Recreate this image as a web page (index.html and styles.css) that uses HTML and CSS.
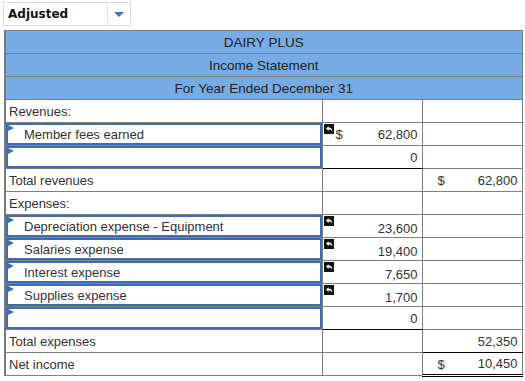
FILE: index.html
```html
<!DOCTYPE html>
<html>
<head>
<meta charset="utf-8">
<link rel="stylesheet" href="styles.css">
</head>
<body>
<div class="dropdown">
  <span class="dd-label">Adjusted</span>
  <span class="dd-btn"><span class="dd-arrow"></span></span>
</div>
<table class="stmt">
  <colgroup><col class="c1"><col class="c2"><col class="c3"></colgroup>
  <tr class="hdr"><td colspan="3">DAIRY PLUS</td></tr>
  <tr class="hdr"><td colspan="3">Income Statement</td></tr>
  <tr class="hdr"><td colspan="3">For Year Ended December 31</td></tr>
  <tr><td class="lbl">Revenues:</td><td></td><td></td></tr>
  <tr><td class="inp"><div class="box"><span class="flag"></span>Member fees earned</div></td>
      <td class="num"><span class="undo"><svg viewBox="0 0 10 10" width="10" height="10"><rect width="10" height="10" fill="#111"/><path d="M2 4.6 L4.6 2.2 L4.6 3.6 C7 3.6 8.3 5 8.3 7.6 C7.6 6 6.4 5.4 4.6 5.5 L4.6 7 Z" fill="#fff"/></svg></span><span class="dol">$</span><span class="v">62,800</span></td><td></td></tr>
  <tr><td class="inp"><div class="box"><span class="flag"></span></div></td>
      <td class="num under"><span class="v">0</span></td><td></td></tr>
  <tr><td class="lbl">Total revenues</td><td></td><td class="num"><span class="dol d3">$</span><span class="v">62,800</span></td></tr>
  <tr><td class="lbl">Expenses:</td><td></td><td></td></tr>
  <tr><td class="inp"><div class="box"><span class="flag"></span>Depreciation expense - Equipment</div></td>
      <td class="num"><span class="undo"><svg viewBox="0 0 10 10" width="10" height="10"><rect width="10" height="10" fill="#111"/><path d="M2 4.6 L4.6 2.2 L4.6 3.6 C7 3.6 8.3 5 8.3 7.6 C7.6 6 6.4 5.4 4.6 5.5 L4.6 7 Z" fill="#fff"/></svg></span><span class="v low">23,600</span></td><td></td></tr>
  <tr><td class="inp"><div class="box"><span class="flag"></span>Salaries expense</div></td>
      <td class="num"><span class="undo"><svg viewBox="0 0 10 10" width="10" height="10"><rect width="10" height="10" fill="#111"/><path d="M2 4.6 L4.6 2.2 L4.6 3.6 C7 3.6 8.3 5 8.3 7.6 C7.6 6 6.4 5.4 4.6 5.5 L4.6 7 Z" fill="#fff"/></svg></span><span class="v low">19,400</span></td><td></td></tr>
  <tr><td class="inp"><div class="box"><span class="flag"></span>Interest expense</div></td>
      <td class="num"><span class="undo"><svg viewBox="0 0 10 10" width="10" height="10"><rect width="10" height="10" fill="#111"/><path d="M2 4.6 L4.6 2.2 L4.6 3.6 C7 3.6 8.3 5 8.3 7.6 C7.6 6 6.4 5.4 4.6 5.5 L4.6 7 Z" fill="#fff"/></svg></span><span class="v low">7,650</span></td><td></td></tr>
  <tr><td class="inp"><div class="box"><span class="flag"></span>Supplies expense</div></td>
      <td class="num"><span class="undo"><svg viewBox="0 0 10 10" width="10" height="10"><rect width="10" height="10" fill="#111"/><path d="M2 4.6 L4.6 2.2 L4.6 3.6 C7 3.6 8.3 5 8.3 7.6 C7.6 6 6.4 5.4 4.6 5.5 L4.6 7 Z" fill="#fff"/></svg></span><span class="v low">1,700</span></td><td></td></tr>
  <tr><td class="inp"><div class="box"><span class="flag"></span></div></td>
      <td class="num under"><span class="v">0</span></td><td></td></tr>
  <tr><td class="lbl">Total expenses</td><td></td><td class="num under"><span class="v">52,350</span></td></tr>
  <tr><td class="lbl">Net income</td><td></td><td class="num dbl"><span class="dol d3">$</span><span class="v">10,450</span></td></tr>
</table>
</body>
</html>
```

FILE: styles.css
```css
html, body {
  margin: 0;
  background: #fff;
}
body {
  padding: 2px 0 0 3px;
  font-family: "Liberation Sans", Arial, sans-serif;
  font-size: 13px;
  color: #333;
}
.dropdown {
  box-sizing: border-box;
  width: 128px;
  height: 24px;
  border: 1px solid #dcdcdc;
  display: flex;
  align-items: stretch;
}
.dd-label {
  flex: 1;
  display: flex;
  align-items: center;
  padding-left: 4px;
  font-family: "DejaVu Sans", Verdana, sans-serif;
  font-weight: bold;
  font-size: 12px;
  color: #111;
}
.dd-btn {
  width: 22px;
  border-left: 1px solid #e4e4e4;
  display: flex;
  align-items: center;
  justify-content: center;
}
.dd-arrow {
  width: 0;
  height: 0;
  border-left: 5px solid transparent;
  border-right: 5px solid transparent;
  border-top: 5px solid #3f74c0;
}
.stmt {
  margin-top: 4px;
  margin-left: 1px;
  border-collapse: collapse;
  table-layout: fixed;
  width: 518px;
  border-left: 2px solid #7a7a7a;
}
.c1 { width: 317px; }
.c2 { width: 100px; }
.c3 { width: 100px; }
.stmt td {
  border: 1px solid #7f7f7f;
  height: 23px;
  padding: 0;
  box-sizing: border-box;
  vertical-align: middle;
  white-space: nowrap;
}
.stmt .hdr td {
  background: #77abe4;
  text-align: center;
  color: #222;
  font-size: 13.5px;
}
.lbl {
  padding-left: 3px !important;
}
.inp {
  position: relative;
}
.box {
  box-sizing: border-box;
  height: 22px;
  border: 2px solid #3e6db3;
  padding-left: 16px;
  display: flex;
  align-items: center;
  position: relative;
}
.flag {
  position: absolute;
  left: 0;
  top: 0;
  width: 0;
  height: 0;
  border-top: 3px solid transparent;
  border-bottom: 3px solid transparent;
  border-left: 6px solid #3e6db3;
}
.num {
  position: relative;
  text-align: right;
  padding-right: 4px !important;
}
.undo {
  position: absolute;
  left: 1px;
  top: 1px;
  line-height: 0;
}
.dol {
  position: absolute;
  left: 13px;
  top: 50%;
  transform: translateY(-50%);
}
.dol.d3 { left: 15px; }
.v.low {
  position: relative;
  top: 2px;
}
.stmt td.under {
  border-bottom: 1px solid #000;
}
.stmt td.dbl {
  border-bottom: 3px double #000;
}
```
